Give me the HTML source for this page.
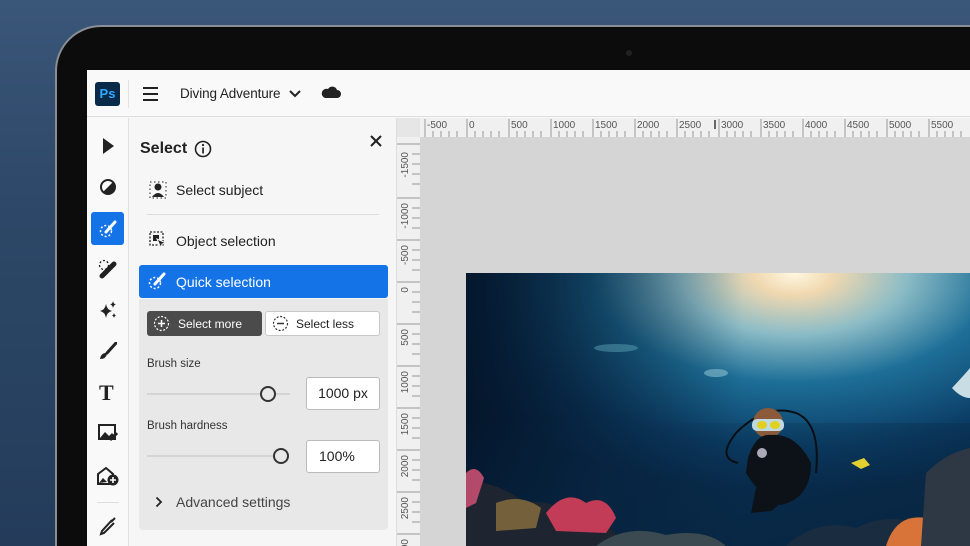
<!DOCTYPE html>
<html><head><meta charset="utf-8"><style>
*{margin:0;padding:0;box-sizing:border-box}
html,body{width:970px;height:546px;overflow:hidden}
body{position:relative;font-family:"Liberation Sans",sans-serif;background:linear-gradient(180deg,#3a5678 0%,#2c4767 40%,#243c5a 100%)}
.abs{position:absolute}
.frame{left:55px;top:25px;width:930px;height:530px;border-radius:46px 0 0 0;background:#0c0c0c;border:2px solid #8a8e94;border-bottom:none}
.screen{left:87px;top:70px;width:883px;height:476px;background:#f8f8f8;overflow:hidden}
.t{font-size:14px;color:#222}
</style></head><body>
<div class="abs frame"></div>
<div class="abs" style="left:626px;top:50px;width:6px;height:6px;border-radius:50%;background:#222"></div>
<div class="abs screen">
  <div class="abs" style="left:0;top:0;width:883px;height:47px;background:#f9f9f9;border-bottom:1px solid #ddd"></div>
  <div class="abs" style="left:8px;top:12px;width:25px;height:24px;background:#0a2a4a;border-radius:3px;color:#31a8ff;font-size:13px;font-weight:bold;line-height:24px;text-align:center">Ps</div>
  <div class="abs" style="left:41px;top:10px;width:1px;height:28px;background:#e3e3e3"></div>
  <div class="abs" style="left:56px;top:17px;width:15px;height:2px;background:#222;box-shadow:0 6px 0 #222,0 12px 0 #222"></div>
  <div class="abs t" style="left:93px;top:16px;font-size:13.5px;letter-spacing:-0.1px">Diving Adventure</div>
  <svg class="abs" style="left:202px;top:19px" width="12" height="9"><path d="M1 2 L6 7 L11 2" fill="none" stroke="#222" stroke-width="2"/></svg>
  <svg class="abs" style="left:234px;top:15px" width="20" height="14"><path d="M4 13 H16 A4 4 0 0 0 16 5 A5 5 0 0 0 7 4 A4.5 4.5 0 0 0 4 13Z" fill="#222"/></svg>
  <div class="abs" style="left:0;top:48px;width:42px;height:430px;background:#f9f9f9;border-right:1px solid #e0e0e0"></div>
  <svg class="abs" style="left:13px;top:67px" width="16" height="18"><path d="M3 1 L14 9 L3 17Z" fill="#222"/></svg>
  <svg class="abs" style="left:12px;top:108px" width="18" height="18"><circle cx="9" cy="9" r="7" fill="none" stroke="#222" stroke-width="2"/><path d="M4 14 L14 4 A7 7 0 0 1 4 14Z" fill="#222"/></svg>
  <div class="abs" style="left:4px;top:142px;width:33px;height:33px;background:#1473e6;border-radius:3px"></div>
  <svg class="abs" style="left:11px;top:149px" width="20" height="20"><circle cx="8" cy="12" r="5.5" fill="none" stroke="#fff" stroke-width="1.5" stroke-dasharray="2 2"/><path d="M8 13 L17 3" stroke="#fff" stroke-width="3" stroke-linecap="round"/></svg>
  <svg class="abs" style="left:11px;top:189px" width="20" height="20"><circle cx="6" cy="6" r="4.5" fill="none" stroke="#222" stroke-width="1.3" stroke-dasharray="2 2"/><path d="M4 17 L16 5" stroke="#222" stroke-width="5" stroke-linecap="round"/></svg>
  <svg class="abs" style="left:11px;top:230px" width="20" height="20"><path d="M8 4 Q9 10 14 11 Q9 12 8 18 Q7 12 2 11 Q7 10 8 4Z" fill="#222"/><path d="M15 1 Q15.5 4 18 4.5 Q15.5 5 15 8 Q14.5 5 12 4.5 Q14.5 4 15 1Z" fill="#222"/><path d="M16 13 Q16.4 15 18 15.5 Q16.4 16 16 18 Q15.6 16 14 15.5 Q15.6 15 16 13Z" fill="#222"/></svg>
  <svg class="abs" style="left:12px;top:272px" width="18" height="18"><path d="M17 1 L8 11" stroke="#222" stroke-width="3" stroke-linecap="round"/><path d="M7 11 Q2 11 1 17 Q7 17 8 12Z" fill="#222"/></svg>
  <div class="abs" style="left:12px;top:310px;font-family:'Liberation Serif',serif;font-size:22px;font-weight:bold;color:#222">T</div>
  <svg class="abs" style="left:11px;top:354px" width="20" height="18"><rect x="1" y="1" width="16" height="14" fill="none" stroke="#222" stroke-width="2"/><path d="M2 14 L7 8 L11 12 L14 9 L17 12 V15 H2Z" fill="#222"/><path d="M12 16 L19 9" stroke="#222" stroke-width="3"/></svg>
  <svg class="abs" style="left:10px;top:396px" width="22" height="20"><path d="M1 8 L9 2 L16 8 V18 H1Z" fill="none" stroke="#222" stroke-width="2"/><path d="M2 17 L6 12 L10 16" fill="#222"/><circle cx="16" cy="14" r="5.5" fill="#222"/><path d="M16 11 V17 M13 14 H19" stroke="#fff" stroke-width="1.6"/></svg>
  <div class="abs" style="left:10px;top:432px;width:22px;height:1px;background:#ddd"></div>
  <svg class="abs" style="left:12px;top:446px" width="18" height="20"><path d="M16 2 L12 6 M13 4 L3 15 L2 18 L5 17 L15 7" stroke="#222" stroke-width="2" fill="none"/></svg>
  <div class="abs" style="left:43px;top:48px;width:267px;height:430px;background:#f6f6f6;border-right:1px solid #ddd"></div>
  <div class="abs" style="left:53px;top:70px;font-size:16px;font-weight:bold;color:#222">Select</div>
  <svg class="abs" style="left:107px;top:70px" width="18" height="18"><circle cx="9" cy="9" r="7.5" fill="none" stroke="#222" stroke-width="1.6"/><rect x="8.2" y="7.5" width="1.7" height="6" fill="#222"/><circle cx="9" cy="5" r="1.1" fill="#222"/></svg>
  <svg class="abs" style="left:283px;top:65px" width="12" height="12"><path d="M1 1 L11 11 M11 1 L1 11" stroke="#222" stroke-width="2"/></svg>
  <svg class="abs" style="left:62px;top:111px" width="18" height="18"><circle cx="9" cy="6" r="3.5" fill="#222"/><path d="M3 16 Q9 8 15 16Z" fill="#222"/><rect x="1" y="1" width="16" height="16" fill="none" stroke="#222" stroke-dasharray="1.5 2.5"/></svg>
  <div class="abs t" style="left:89px;top:112px">Select subject</div>
  <div class="abs" style="left:60px;top:144px;width:232px;height:1px;background:#ddd"></div>
  <svg class="abs" style="left:62px;top:161px" width="18" height="18"><rect x="1" y="1" width="13" height="13" fill="none" stroke="#222" stroke-width="1.3" stroke-dasharray="2 1.5"/><rect x="4" y="4" width="6" height="6" fill="#222"/><path d="M8 8 L17 12 L13 13 L12 17Z" fill="#222" stroke="#f6f6f6"/></svg>
  <div class="abs t" style="left:89px;top:163px">Object selection</div>
  <div class="abs" style="left:52px;top:195px;width:249px;height:33px;background:#1473e6;border-radius:3px"></div>
  <svg class="abs" style="left:60px;top:201px" width="20" height="20"><circle cx="8" cy="12" r="5.5" fill="none" stroke="#fff" stroke-width="1.5" stroke-dasharray="2 2"/><path d="M8 13 L17 3" stroke="#fff" stroke-width="3" stroke-linecap="round"/></svg>
  <div class="abs" style="left:89px;top:204px;font-size:14px;color:#fff">Quick selection</div>
  <div class="abs" style="left:52px;top:229px;width:249px;height:231px;background:#e8e8e8;border-radius:0 0 4px 4px"></div>
  <div class="abs" style="left:60px;top:241px;width:115px;height:25px;background:#4b4b4b;border-radius:3px"></div>
  <svg class="abs" style="left:66px;top:245px" width="17" height="17"><circle cx="8.5" cy="8.5" r="7" fill="none" stroke="#fff" stroke-width="1.2" stroke-dasharray="2 1.6"/><path d="M8.5 5 V12 M5 8.5 H12" stroke="#fff" stroke-width="1.5"/></svg>
  <div class="abs" style="left:91px;top:247px;font-size:12px;color:#fff">Select more</div>
  <div class="abs" style="left:178px;top:241px;width:115px;height:25px;background:#fff;border:1px solid #c8c8c8;border-radius:3px"></div>
  <svg class="abs" style="left:185px;top:245px" width="17" height="17"><circle cx="8.5" cy="8.5" r="7" fill="none" stroke="#333" stroke-width="1.2" stroke-dasharray="2 1.6"/><path d="M5 8.5 H12" stroke="#333" stroke-width="1.5"/></svg>
  <div class="abs" style="left:209px;top:247px;font-size:12px;color:#222">Select less</div>
  <div class="abs" style="left:60px;top:288px;font-size:11.5px;color:#333">Brush size</div>
  <div class="abs" style="left:60px;top:323px;width:143px;height:2px;background:#d4d4d4"></div>
  <div class="abs" style="left:173px;top:316px;width:16px;height:16px;border-radius:50%;border:2px solid #333;background:#e8e8e8"></div>
  <div class="abs" style="left:219px;top:307px;width:74px;height:33px;background:#fff;border:1px solid #bbb;border-radius:3px;font-size:14px;line-height:31px;text-align:center;color:#222">1000 px</div>
  <div class="abs" style="left:60px;top:350px;font-size:11.5px;color:#333">Brush hardness</div>
  <div class="abs" style="left:60px;top:385px;width:130px;height:2px;background:#d4d4d4"></div>
  <div class="abs" style="left:186px;top:378px;width:16px;height:16px;border-radius:50%;border:2px solid #333;background:#e8e8e8"></div>
  <div class="abs" style="left:219px;top:370px;width:74px;height:33px;background:#fff;border:1px solid #bbb;border-radius:3px;font-size:14px;line-height:31px;padding-left:12px;color:#222">100%</div>
  <svg class="abs" style="left:68px;top:426px" width="8" height="12"><path d="M1.5 1.5 L6 6 L1.5 10.5" fill="none" stroke="#222" stroke-width="1.8"/></svg>
  <div class="abs" style="left:89px;top:424px;font-size:14px;color:#444">Advanced settings</div>
  <div class="abs" style="left:310px;top:48px;width:573px;height:430px;background:#d5d5d5"></div>
  <svg class="abs" style="left:310px;top:48px" width="573" height="430" font-family="Liberation Sans" font-size="10" fill="#555">
    <rect x="0" y="0" width="573" height="19" fill="#f0f0f0"/>
    <rect x="0" y="0" width="23" height="430" fill="#f0f0f0"/>
    <rect x="0" y="0" width="23" height="19" fill="#e6e6e6"/>
    <g stroke="#999" stroke-width="1">
      <path d="M28 1V19M70 1V19M112 1V19M154 1V19M196 1V19M238 1V19M280 1V19M322 1V19M364 1V19M406 1V19M448 1V19M490 1V19M532 1V19"/>
      <path d="M36 13V19M44 13V19M52 13V19M60 13V19M78 13V19M86 13V19M94 13V19M102 13V19M120 13V19M128 13V19M136 13V19M144 13V19M162 13V19M170 13V19M178 13V19M186 13V19M204 13V19M212 13V19M220 13V19M228 13V19M246 13V19M254 13V19M262 13V19M270 13V19M288 13V19M296 13V19M304 13V19M312 13V19M330 13V19M338 13V19M346 13V19M354 13V19M372 13V19M380 13V19M388 13V19M396 13V19M414 13V19M422 13V19M430 13V19M438 13V19M456 13V19M464 13V19M472 13V19M480 13V19M498 13V19M506 13V19M514 13V19M522 13V19M540 13V19M548 13V19M556 13V19M564 13V19"/>
      <path d="M0 26H23M0 80H23M0 122H23M0 164H23M0 206H23M0 248H23M0 290H23M0 332H23M0 374H23M0 416H23"/>
      <path d="M15 36H23M15 46H23M15 56H23M15 66H23M15 90H23M15 100H23M15 110H23M15 132H23M15 142H23M15 152H23M15 174H23M15 184H23M15 194H23M15 216H23M15 226H23M15 236H23M15 258H23M15 268H23M15 278H23M15 300H23M15 310H23M15 320H23M15 342H23M15 352H23M15 362H23M15 384H23M15 394H23M15 404H23"/>
    </g>
    <rect x="317" y="2" width="2" height="9" fill="#666"/>
    <text x="30" y="10">-500</text><text x="72" y="10">0</text><text x="114" y="10">500</text><text x="156" y="10">1000</text><text x="198" y="10">1500</text><text x="240" y="10">2000</text><text x="282" y="10">2500</text><text x="324" y="10">3000</text><text x="366" y="10">3500</text><text x="408" y="10">4000</text><text x="450" y="10">4500</text><text x="492" y="10">5000</text><text x="534" y="10">5500</text>
    <g>
      <text transform="translate(11 34) rotate(-90)" text-anchor="end">-1500</text>
      <text transform="translate(11 85) rotate(-90)" text-anchor="end">-1000</text>
      <text transform="translate(11 127) rotate(-90)" text-anchor="end">-500</text>
      <text transform="translate(11 169) rotate(-90)" text-anchor="end">0</text>
      <text transform="translate(11 211) rotate(-90)" text-anchor="end">500</text>
      <text transform="translate(11 253) rotate(-90)" text-anchor="end">1000</text>
      <text transform="translate(11 295) rotate(-90)" text-anchor="end">1500</text>
      <text transform="translate(11 337) rotate(-90)" text-anchor="end">2000</text>
      <text transform="translate(11 379) rotate(-90)" text-anchor="end">2500</text>
      <text transform="translate(11 421) rotate(-90)" text-anchor="end">3000</text>
    </g>
  </svg>
  <svg class="abs" style="left:379px;top:203px" width="504" height="273">
    <defs>
      <radialGradient id="sun" cx="0.65" cy="0" r="0.8"><stop offset="0" stop-color="#fff8e0"/><stop offset="0.1" stop-color="#f0d8b0"/><stop offset="0.28" stop-color="#8cbcc6"/><stop offset="0.5" stop-color="#1d6f98"/><stop offset="0.8" stop-color="#0b3d66"/><stop offset="1" stop-color="#082a4c"/></radialGradient>
      <linearGradient id="dk" x1="0" x2="1"><stop offset="0" stop-color="#04152a" stop-opacity="0.95"/><stop offset="0.55" stop-color="#061a30" stop-opacity="0"/></linearGradient>
      <linearGradient id="bt" y1="0" y2="1"><stop offset="0" stop-color="#0a3050" stop-opacity="0"/><stop offset="1" stop-color="#06223a" stop-opacity="0.7"/></linearGradient>
    </defs>
    <rect width="504" height="273" fill="url(#sun)"/>
    <rect width="504" height="273" fill="url(#dk)"/>
    <rect y="150" width="504" height="123" fill="url(#bt)"/>
    <ellipse cx="150" cy="75" rx="22" ry="4" fill="#5aa0b4" opacity="0.5"/>
    <ellipse cx="250" cy="100" rx="12" ry="4" fill="#9fd0dc" opacity="0.5"/>
    <path d="M270 160 Q300 130 330 140 Q355 150 350 200" fill="none" stroke="#0a0f14" stroke-width="2"/>
    <path d="M270 160 Q250 185 272 190" fill="none" stroke="#0a0f14" stroke-width="2"/>
    <circle cx="302" cy="150" r="15" fill="#8a5a3a"/>
    <path d="M282 185 Q290 160 305 162 Q330 160 345 190 Q345 225 315 232 Q295 225 280 200Z" fill="#0c1218"/>
    <rect x="286" y="146" width="32" height="12" rx="5" fill="#c0d8e0"/>
    <ellipse cx="296" cy="152" rx="5" ry="4" fill="#e0d020"/><ellipse cx="309" cy="152" rx="5" ry="4" fill="#e0d020"/>
    <circle cx="296" cy="180" r="5" fill="#aab"/>
    <path d="M290 215 L285 240 L305 238 L318 228Z" fill="#0c1218"/>
    <path d="M0 273 V205 Q10 195 18 210 Q40 215 60 230 Q80 225 100 240 L140 250 L160 273Z" fill="#1e2430"/>
    <path d="M0 200 Q10 190 18 205 L10 230 L0 235Z" fill="#b44a6a"/>
    <path d="M80 240 Q100 215 120 230 Q140 220 150 245 L140 260 L90 258Z" fill="#c23c58"/>
    <path d="M30 230 Q55 220 75 235 L70 255 L30 258Z" fill="#8a7040" opacity="0.8"/>
    <path d="M130 273 Q160 250 200 262 Q240 255 260 273Z" fill="#3a4a50"/>
    <path d="M320 273 Q350 245 390 255 Q420 240 450 250 Q480 230 504 240 V273Z" fill="#1a2c40"/>
    <path d="M420 273 Q430 240 460 245 Q480 250 475 273Z" fill="#d8743a"/>
    <path d="M460 200 Q480 180 504 175 V273 H455Z" fill="#2e3844"/>
    <path d="M486 115 Q500 100 504 95 V125 Q495 125 486 115Z" fill="#c8dde4"/>
    <path d="M385 190 L398 185 L404 192 L395 196Z" fill="#e2d030"/>
  </svg>
</div>
</body></html>
